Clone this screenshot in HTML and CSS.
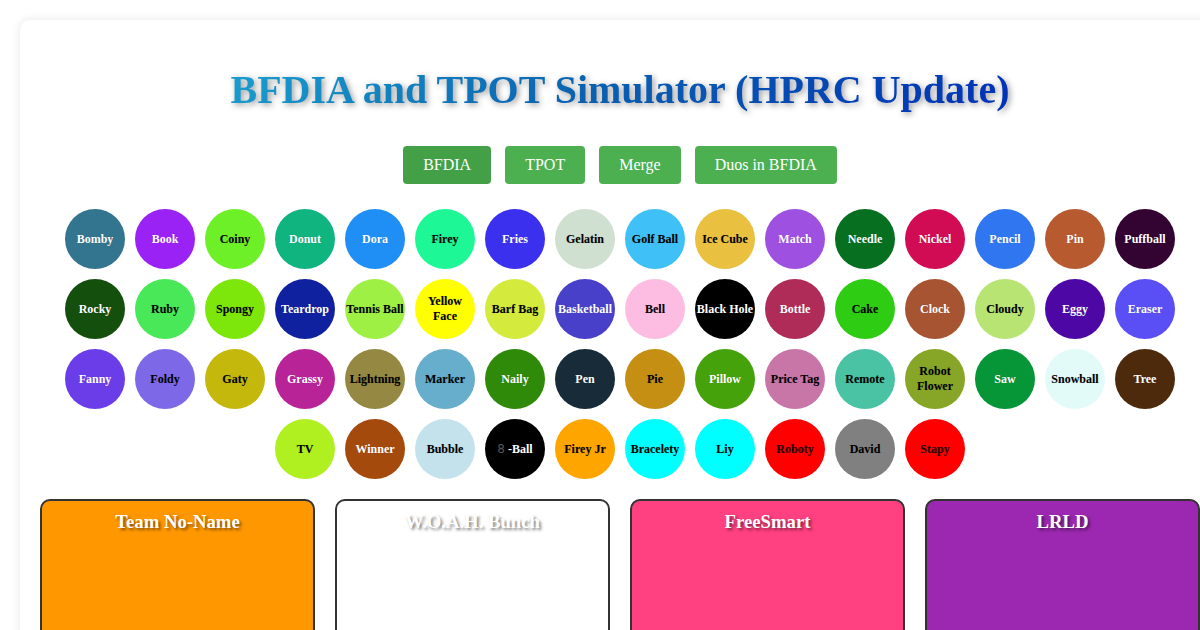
FILE: index.html
```html
<!DOCTYPE html>
<html lang="en">
<head>
<meta charset="utf-8">
<title>BFDIA and TPOT Simulator (HPRC Update)</title>
<link rel="stylesheet" href="styles.css">
</head>
<body>
<div class="container">
  <h1 class="title"><span class="title-text">BFDIA and TPOT Simulator (HPRC Update)</span></h1>
  <div class="modes">
    <button class="mode active">BFDIA</button>
    <button class="mode">TPOT</button>
    <button class="mode">Merge</button>
    <button class="mode">Duos in BFDIA</button>
  </div>
  <div class="roster">
    <div class="ch" style="background:#33758f;color:#fff">Bomby</div>
    <div class="ch" style="background:#9b22f5;color:#fff">Book</div>
    <div class="ch" style="background:#6ef028;color:#000">Coiny</div>
    <div class="ch" style="background:#10b47f;color:#fff">Donut</div>
    <div class="ch" style="background:#1f8ff5;color:#fff">Dora</div>
    <div class="ch" style="background:#1ef796;color:#000">Firey</div>
    <div class="ch" style="background:#3a30ee;color:#fff">Fries</div>
    <div class="ch" style="background:#cfdfd0;color:#000">Gelatin</div>
    <div class="ch" style="background:#3fc1f7;color:#000">Golf Ball</div>
    <div class="ch" style="background:#e9c040;color:#000">Ice Cube</div>
    <div class="ch" style="background:#9e50e0;color:#fff">Match</div>
    <div class="ch" style="background:#067020;color:#fff">Needle</div>
    <div class="ch" style="background:#d10c55;color:#fff">Nickel</div>
    <div class="ch" style="background:#2f76f0;color:#fff">Pencil</div>
    <div class="ch" style="background:#b85a30;color:#fff">Pin</div>
    <div class="ch" style="background:#330432;color:#fff">Puffball</div>

    <div class="ch" style="background:#144f0d;color:#fff">Rocky</div>
    <div class="ch" style="background:#48e858;color:#000">Ruby</div>
    <div class="ch" style="background:#7de60a;color:#000">Spongy</div>
    <div class="ch" style="background:#1021a0;color:#fff">Teardrop</div>
    <div class="ch" style="background:#9ef045;color:#000">Tennis Ball</div>
    <div class="ch" style="background:#ffff00;color:#000">Yellow Face</div>
    <div class="ch" style="background:#d4ea3c;color:#000">Barf Bag</div>
    <div class="ch" style="background:#4840c8;color:#fff">Basketball</div>
    <div class="ch" style="background:#fdbde2;color:#000">Bell</div>
    <div class="ch" style="background:#000000;color:#fff">Black Hole</div>
    <div class="ch" style="background:#b02c58;color:#fff">Bottle</div>
    <div class="ch" style="background:#2ecc12;color:#000">Cake</div>
    <div class="ch" style="background:#a65432;color:#fff">Clock</div>
    <div class="ch" style="background:#b8e474;color:#000">Cloudy</div>
    <div class="ch" style="background:#4d07a5;color:#fff">Eggy</div>
    <div class="ch" style="background:#5a4ff5;color:#fff">Eraser</div>

    <div class="ch" style="background:#6a3de8;color:#fff">Fanny</div>
    <div class="ch" style="background:#7d69e8;color:#000">Foldy</div>
    <div class="ch" style="background:#c4b80c;color:#000">Gaty</div>
    <div class="ch" style="background:#b82498;color:#fff">Grassy</div>
    <div class="ch" style="background:#958842;color:#000">Lightning</div>
    <div class="ch" style="background:#66aecc;color:#000">Marker</div>
    <div class="ch" style="background:#2e8a08;color:#fff">Naily</div>
    <div class="ch" style="background:#182b38;color:#fff">Pen</div>
    <div class="ch" style="background:#c48f12;color:#000">Pie</div>
    <div class="ch" style="background:#46a20a;color:#fff">Pillow</div>
    <div class="ch" style="background:#c876a8;color:#000">Price Tag</div>
    <div class="ch" style="background:#4ac2a4;color:#000">Remote</div>
    <div class="ch" style="background:#87a628;color:#000">Robot Flower</div>
    <div class="ch" style="background:#069537;color:#fff">Saw</div>
    <div class="ch" style="background:#e2fbf8;color:#000">Snowball</div>
    <div class="ch" style="background:#4e2a0c;color:#fff">Tree</div>

    <div class="ch" style="background:#b0f020;color:#000">TV</div>
    <div class="ch" style="background:#a54a0d;color:#fff">Winner</div>
    <div class="ch" style="background:#c3e2ec;color:#000">Bubble</div>
    <div class="ch" style="background:#000000;color:#fff"><span class="eight">8</span>&nbsp;-Ball</div>
    <div class="ch" style="background:#ffa500;color:#000">Firey Jr</div>
    <div class="ch" style="background:#00ffff;color:#000">Bracelety</div>
    <div class="ch" style="background:#00ffff;color:#000">Liy</div>
    <div class="ch" style="background:#ff0000;color:#200">Roboty</div>
    <div class="ch" style="background:#808080;color:#000">David</div>
    <div class="ch" style="background:#ff0000;color:#200">Stapy</div>
  </div>
  <div class="teams">
    <div class="team team-orange"><h3 class="team-name">Team No-Name</h3></div>
    <div class="team team-white"><h3 class="team-name">W.O.A.H. Bunch</h3></div>
    <div class="team team-pink"><h3 class="team-name">FreeSmart</h3></div>
    <div class="team team-purple"><h3 class="team-name">LRLD</h3></div>
  </div>
</div>
</body>
</html>
```
FILE: styles.css
```css
html {
  overflow: hidden;
}
body {
  margin: 0;
  padding: 20px;
  background: #ffffff;
  font-family: "Liberation Serif", "Times New Roman", serif;
}
.container {
  width: 1200px;
  box-sizing: border-box;
  padding: 20px;
  background: #ffffff;
  border-radius: 10px;
  box-shadow: 0 0 10px rgba(0, 0, 0, 0.1);
}
.title {
  margin: 27px 0 33px;
  text-align: center;
  font-size: 40px;
  font-weight: bold;
  line-height: 46px;
}
.title-text {
  display: inline-block;
  background: linear-gradient(135deg, #1a9fcf, #0a62b0 45%, #0030b8);
  -webkit-background-clip: text;
  background-clip: text;
  color: transparent;
  filter: drop-shadow(2px 2px 3px rgba(0, 0, 0, 0.4));
}
.modes {
  display: flex;
  justify-content: center;
  gap: 14px;
  margin: 0 0 25px;
}
.mode {
  font-family: "Liberation Serif", "Times New Roman", serif;
  font-size: 16px;
  line-height: 18px;
  color: #ffffff;
  background: #4caf50;
  border: none;
  border-radius: 4px;
  padding: 10px 20px;
}
.mode.active {
  background: #43a047;
}
.roster {
  display: flex;
  flex-wrap: wrap;
  justify-content: center;
  gap: 10px;
}
.ch {
  width: 60px;
  height: 60px;
  border-radius: 50%;
  display: flex;
  align-items: center;
  justify-content: center;
  text-align: center;
  font-size: 12px;
  font-weight: bold;
  line-height: 15px;
  text-shadow: 0 0 1px rgba(0, 0, 0, 0.15);
}
.eight {
  font-family: "DejaVu Sans", sans-serif;
  font-weight: normal;
  color: #555555;
}
.teams {
  display: grid;
  grid-template-columns: repeat(4, 1fr);
  gap: 20px;
  margin-top: 20px;
}
.team {
  min-height: 220px;
  border: 2px solid #333333;
  border-radius: 10px;
  padding: 10px;
}
.team-name {
  margin: 0;
  text-align: center;
  font-size: 18.72px;
  color: #ffffff;
  text-shadow: 2px 2px 3px rgba(0, 0, 0, 0.5);
}
.team-orange { background: #ff9800; }
.team-white { background: #ffffff; }
.team-pink { background: #ff4081; }
.team-purple { background: #9c27b0; }
```
